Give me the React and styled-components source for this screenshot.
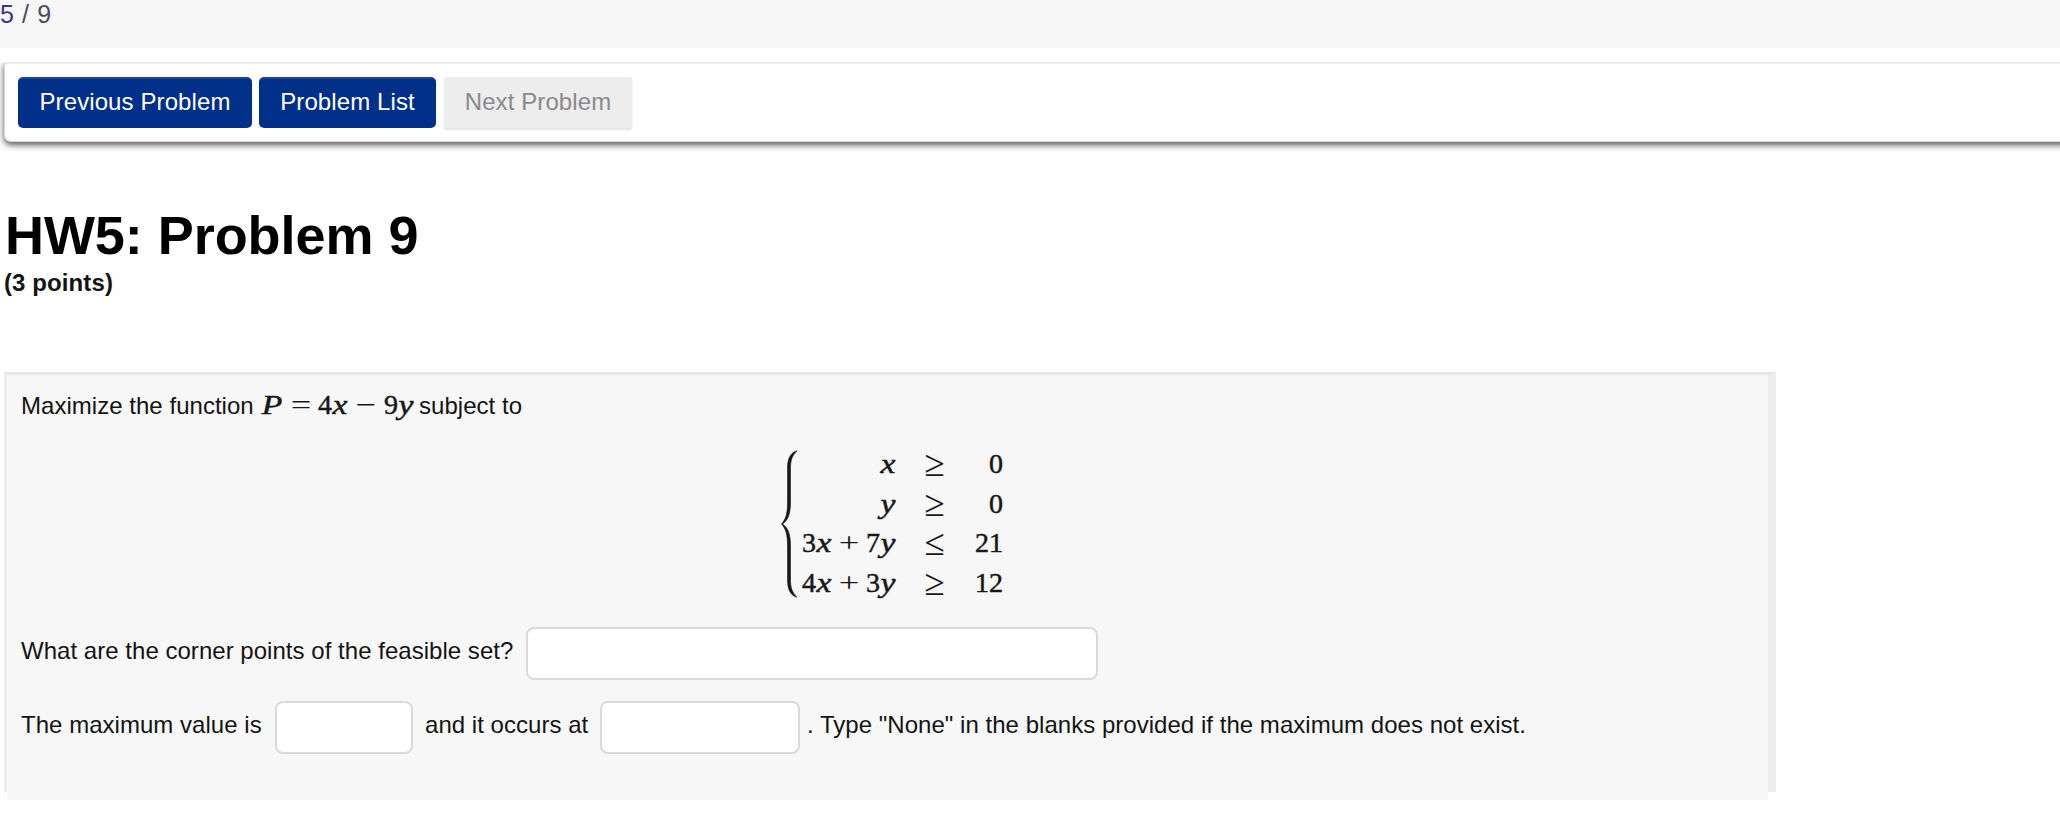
/* eslint-disable react/prop-types */
import styled, { createGlobalStyle } from "styled-components";

const GlobalStyle = createGlobalStyle`
    * {
        box-sizing: border-box;
    }

    body {
        margin: 0;
        background: #fefefe;
        color: #141414;
        font-family: "Liberation Sans", Arial, sans-serif;
        font-size: 24px;
        line-height: 28px;
        overflow: hidden;
    }
`;

const Page = styled.div`
    width: 100%;
    height: 822px;
    overflow: hidden;
`;

const Progress = styled.div`
    height: 48px;
    background: #f7f7f7;
    color: #4a4a5c;
    font-size: 25px;
    letter-spacing: 0.6px;
`;

const Current = styled.span`
    color: #3f3384;
`;

const Toolbar = styled.nav`
    display: flex;
    align-items: flex-start;
    height: 80px;
    margin: 14px -12px 0 4px;
    padding: 13px 13px;
    background: #fff;
    border: 1px solid #d8d8d8;
    border-top: 2px solid #ededed;
    border-radius: 0 0 7px 7px;
    box-shadow: 0 3px 6px rgba(0, 0, 0, 0.65);
    clip-path: inset(0 0 -12px -8px);
`;

const NavButton = styled.button`
    width: ${(props) => props.$width}px;
    height: 51px;
    margin-right: ${(props) => props.$gap || 0}px;
    padding: 0 0 3px;
    border: none;
    border-top: 2px solid #24418b;
    border-radius: 5px;
    background: #00308a;
    color: #fff;
    font: inherit;
    letter-spacing: 0.1px;
    white-space: nowrap;

    &:disabled {
        border-top-color: #ededed;
        border-radius: 2px;
        background: #ededed;
        color: #8a8a8a;
        box-shadow: 0 2px 2px #e4e4e4;
    }
`;

const Title = styled.h1`
    margin: 62px 0 0 5px;
    color: #000;
    font-size: 54px;
    line-height: 62px;
    letter-spacing: -0.05px;
`;

const Points = styled.div`
    margin: 3px 0 0 4px;
    font-weight: bold;
    letter-spacing: 0.1px;
`;

const Problem = styled.main`
    width: 1772px;
    height: 428px;
    margin: 75px 0 0 4px;
    padding: 15px 0 0 14px;
    background: #f7f7f7;
    border: solid #ededed;
    border-width: 3px 8px 0 3px;
    border-top-color: #e6e6e6;
    clip-path: polygon(0 0, 100% 0, 100% 420px, 1764px 420px, 1764px 100%, 3px 100%, 3px 420px, 0 420px);
`;

const Line = styled.div`
    display: flex;
    align-items: center;
    height: 53px;
    margin-top: ${(props) => props.$top}px;
    white-space: pre;
`;

const Statement = styled.div`
    display: flex;
    align-items: baseline;
    height: 30px;
    white-space: pre;
`;

const Label = styled.span`
    flex: none;
    width: ${(props) => (props.$width ? `${props.$width}px` : "auto")};
    padding-bottom: 5px;
    letter-spacing: 0.03px;
`;

const Answer = styled.input`
    flex: none;
    width: ${(props) => props.$width}px;
    height: 53px;
    margin-right: ${(props) => props.$gap || 0}px;
    border: 2px solid #dadada;
    border-radius: 8px;
    background: #fff;
    font: inherit;
    outline: none;
`;

const MathText = styled.span`
    flex: none;
    width: ${(props) => (props.$width ? `${props.$width}px` : "auto")};
    color: #181818;
    font-family: "Liberation Serif", "Times New Roman", serif;
    font-size: 28px;
    line-height: 30px;
    -webkit-text-stroke: 0.5px currentColor;
    white-space: pre;
`;

const Variable = styled.i`
    display: inline-block;
    width: ${(props) => props.$width || 16}px;
    text-align: center;
    transform: scaleX(1.2);
`;

const Sign = styled.span`
    display: inline-block;
    width: ${(props) => props.$width}px;
    text-align: center;
    -webkit-text-stroke: 0;
    transform: scaleX(1.3);
`;

const System = styled.div`
    display: flex;
    margin: 24px 0 0 760px;
    height: 158px;
`;

const Brace = styled.svg`
    width: 18px;
    height: 148px;
    margin-top: 6px;
    fill: #181818;
    stroke: #181818;
    stroke-width: 0.6;
`;

const Rows = styled.div`
    display: grid;
    grid-template-columns: 97px 51px 56px;
    grid-auto-rows: 39.5px;
`;

const Cell = styled(MathText)`
    line-height: 39px;
    text-align: ${(props) => props.$align || "right"};
`;

const Relation = styled(Cell)`
    padding-left: 26px;
    font-size: 37px;
    -webkit-text-stroke: 0;
`;

const X = () => <Variable>x</Variable>;
const Y = () => <Variable>y</Variable>;
const Plus = () => <Sign $width={34}>+</Sign>;

const constraints = [
    { left: <X />, sign: "≥", right: "0" },
    { left: <Y />, sign: "≥", right: "0" },
    { left: <>3<X /><Plus />7<Y /></>, sign: "≤", right: "21" },
    { left: <>4<X /><Plus />3<Y /></>, sign: "≥", right: "12" },
];

function ConstraintSystem() {
    return (
        <System>
            <Brace viewBox="0 0 18 148">
                <path d="M16 1 C10 2 6.500 8 6.500 18 V52 C6.500 63 5 69 0.500 74 C5 79 6.500 85 6.500 96 V130 C6.500 140 10 146 16 147 C11.500 143 9.500 138 9.500 130 V96 C9.500 85 7.500 78 1.500 74 C7.500 70 9.500 63 9.500 52 V18 C9.500 10 11.500 5 16 1 Z" />
            </Brace>
            <Rows>
                {constraints.map((item, index) => [
                    <Cell key={`left-${index}`}>{item.left}</Cell>,
                    <Relation key={`sign-${index}`} $align="center">{item.sign}</Relation>,
                    <Cell key={`right-${index}`}>{item.right}</Cell>,
                ])}
            </Rows>
        </System>
    );
}

export default function App() {
    return (
        <Page>
            <GlobalStyle />
            <Progress><Current>5</Current> / 9</Progress>
            <Toolbar>
                <NavButton $width={234} $gap={7}>Previous Problem</NavButton>
                <NavButton $width={177} $gap={8}>Problem List</NavButton>
                <NavButton $width={188} disabled>Next Problem</NavButton>
            </Toolbar>
            <Title>HW5: Problem 9</Title>
            <Points>(3 points)</Points>
            <Problem>
                <Statement>
                    <Label $width={239}>Maximize the function</Label>
                    <MathText $width={159}><Variable $width={24}>P</Variable><Sign $width={34}>=</Sign>4<X /><Sign $width={36}>−</Sign>9<Y /></MathText>
                    <Label>subject to</Label>
                </Statement>
                <ConstraintSystem />
                <Line $top={25}>
                    <Label $width={505}>What are the corner points of the feasible set?</Label>
                    <Answer $width={572} />
                </Line>
                <Line $top={21}>
                    <Label $width={254}>The maximum value is</Label>
                    <Answer $width={138} $gap={12} />
                    <Label $width={175}>and it occurs at</Label>
                    <Answer $width={200} $gap={7} />
                    <Label>. Type "None" in the blanks provided if the maximum does not exist.</Label>
                </Line>
            </Problem>
        </Page>
    );
}
